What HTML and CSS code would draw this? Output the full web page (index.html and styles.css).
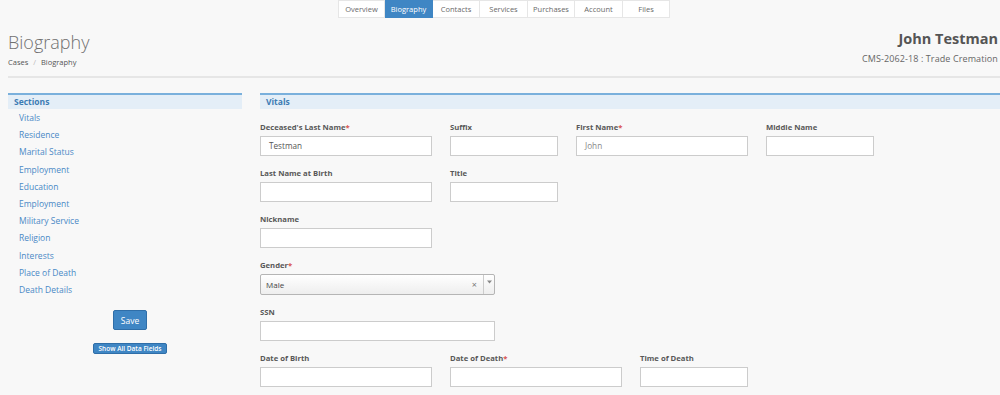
FILE: index.html
```html
<!DOCTYPE html>
<html>
<head>
<meta charset="utf-8">
<link rel="stylesheet" href="styles.css">
</head>
<body>
<nav class="tabs">
  <a class="tab">Overview</a>
  <a class="tab active">Biography</a>
  <a class="tab">Contacts</a>
  <a class="tab">Services</a>
  <a class="tab">Purchases</a>
  <a class="tab">Account</a>
  <a class="tab">Files</a>
</nav>
<div class="page">
  <header class="head">
    <div class="head-left">
      <h1 class="title">Biography</h1>
      <div class="crumbs">Cases <span class="sep">/</span> Biography</div>
    </div>
    <div class="head-right">
      <div class="name">John Testman</div>
      <div class="case">CMS-2062-18 : Trade Cremation</div>
    </div>
  </header>
  <div class="rule"></div>
  <div class="content">
    <aside class="side">
      <div class="panel-head">Sections</div>
      <ul class="sections">
        <li>Vitals</li>
        <li>Residence</li>
        <li>Marital Status</li>
        <li>Employment</li>
        <li>Education</li>
        <li>Employment</li>
        <li>Military Service</li>
        <li>Religion</li>
        <li>Interests</li>
        <li>Place of Death</li>
        <li>Death Details</li>
      </ul>
      <div class="actions">
        <button class="btn btn-save">Save</button>
        <button class="btn btn-small">Show All Data Fields</button>
      </div>
    </aside>
    <main class="main">
      <div class="panel-head">Vitals</div>
      <div class="form">
        <div class="row">
          <div class="field w-lg"><label>Deceased's Last Name<span class="req">*</span></label><div class="input">Testman</div></div>
          <div class="field w-sm"><label>Suffix</label><div class="input"></div></div>
          <div class="field w-lg"><label>First Name<span class="req">*</span></label><div class="input light">John</div></div>
          <div class="field w-sm"><label>Middle Name</label><div class="input"></div></div>
        </div>
        <div class="row">
          <div class="field w-lg"><label>Last Name at Birth</label><div class="input"></div></div>
          <div class="field w-sm"><label>Title</label><div class="input"></div></div>
        </div>
        <div class="row">
          <div class="field w-lg"><label>Nickname</label><div class="input"></div></div>
        </div>
        <div class="row">
          <div class="field w-md"><label>Gender<span class="req">*</span></label>
            <div class="select"><span class="sel-val">Male</span><span class="sel-x">×</span><span class="sel-arrow"><svg width="5" height="4" viewBox="0 0 5 4"><path d="M0 0.5h5L2.5 3.5z" fill="#888"/></svg></span></div>
          </div>
        </div>
        <div class="row">
          <div class="field w-md"><label>SSN</label><div class="input"></div></div>
        </div>
        <div class="row">
          <div class="field w-lg"><label>Date of Birth</label><div class="input"></div></div>
          <div class="field w-lg"><label>Date of Death<span class="req">*</span></label><div class="input"></div></div>
          <div class="field w-sm"><label>Time of Death</label><div class="input"></div></div>
        </div>
      </div>
    </main>
  </div>
</div>
</body>
</html>
```
FILE: styles.css
```css
* { box-sizing: border-box; }
html, body { margin: 0; padding: 0; }
body {
  background: #f8f8f8;
  font-family: "Open Sans", "Liberation Sans", sans-serif;
  color: #555;
  width: 1000px;
  height: 395px;
  overflow: hidden;
}
.tabs {
  display: flex;
  justify-content: center;
  margin-left: 8px;
  height: 18px;
}
.tab {
  width: 47.5px;
  height: 18px;
  background: #fff;
  border: 1px solid #e6e6e6;
  border-left: none;
  font-size: 7.5px;
  line-height: 17px;
  text-align: center;
  color: #6a6a6a;
}
.tab:first-child { border-left: 1px solid #e6e6e6; }
.tab.active {
  background: #3f86c4;
  border-color: #3f86c4;
  color: #fff;
}
.page { padding-left: 8px; }
.head {
  display: flex;
  justify-content: space-between;
  align-items: flex-start;
  height: 57px;
}
.title {
  margin: 13px 0 0;
  font-size: 18px;
  font-weight: 300;
  color: #707070;
  line-height: 22px;
}
.crumbs {
  font-size: 7.5px;
  color: #555;
  margin-top: 4px;
}
.crumbs .sep { color: #bbb; margin: 0 3px; }
.head-right {
  text-align: right;
  padding-right: 2px;
  padding-top: 11px;
}
.name {
  font-size: 14.5px;
  font-weight: 700;
  color: #555;
  line-height: 20px;
}
.case {
  font-size: 9px;
  color: #666;
  margin-top: 3px;
  letter-spacing: 0.1px;
}
.rule {
  height: 2px;
  background: #e6e6e6;
  margin-top: 1px;
}
.content {
  display: flex;
  gap: 18px;
  margin-top: 15px;
}
.side { width: 234px; flex: none; }
.main { flex: 1; }
.panel-head {
  background: #e4eef7;
  border-top: 2px solid #7ab0dc;
  height: 16px;
  padding-left: 6px;
  font-size: 8.5px;
  font-weight: 700;
  color: #3d7cb4;
  line-height: 14px;
}
.sections {
  list-style: none;
  margin: 0;
  padding: 0 0 0 11px;
}
.sections li {
  font-size: 8.5px;
  color: #4a89c6;
  height: 17.2px;
  line-height: 17.2px;
}
.actions {
  display: flex;
  flex-direction: column;
  align-items: center;
  margin-top: 12px;
  padding-left: 10px;
}
.btn {
  font-family: "Open Sans", "Liberation Sans", sans-serif;
  background: #3f86c4;
  color: #fff;
  border: 1px solid #2f6ea8;
  border-radius: 2px;
  padding: 0;
}
.btn-save {
  width: 34px;
  height: 20px;
  font-size: 8.5px;
}
.btn-small {
  margin-top: 13px;
  width: 74px;
  height: 11px;
  font-size: 6.5px;
  font-weight: 600;
  line-height: 9px;
}
.form { padding-top: 12px; }
.row {
  display: flex;
  gap: 18px;
  margin-bottom: 11px;
}
.field label {
  display: block;
  font-size: 7.7px;
  font-weight: 700;
  color: #585858;
  height: 15px;
  line-height: 13px;
}
.req { color: #d9534f; }
.w-lg { width: 172px; }
.w-sm { width: 108px; }
.w-md { width: 235px; }
.input {
  height: 20px;
  background: #fff;
  border: 1px solid #cccccc;
  font-size: 8.2px;
  line-height: 18px;
  padding-left: 8px;
  color: #555;
}
.input.light { color: #888; }
.select {
  display: flex;
  align-items: center;
  height: 21px;
  border: 1px solid #b5b5b5;
  border-radius: 2px;
  background: linear-gradient(#ffffff, #eeeeee);
  font-size: 8px;
  color: #444;
}
.sel-val { flex: 1; padding-left: 5px; }
.sel-x { font-size: 9px; color: #777; margin-right: 6px; }
.sel-arrow {
  width: 11px;
  height: 100%;
  border-left: 1px solid #ccc;
  display: flex;
  justify-content: center;
  padding-top: 5px;
}
```
